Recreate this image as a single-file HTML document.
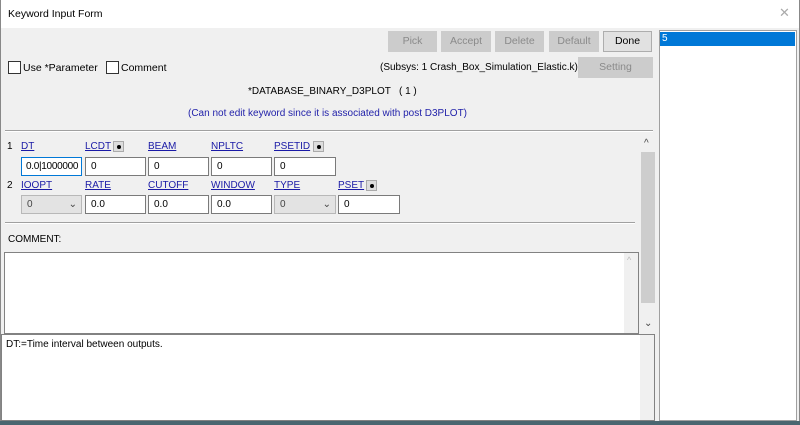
<!DOCTYPE html>
<html><head><style>
*{box-sizing:border-box;margin:0;padding:0}
body{width:800px;height:425px;background:#f0f0f0;font-family:"Liberation Sans",sans-serif;font-size:10px;color:#000;position:relative;overflow:hidden}
.a{position:absolute}
.btn{position:absolute;height:21px;background:#cccccc;border:1px solid #cccccc;color:#8a8a8a;text-align:center;line-height:19px;font-size:10.5px}
.in{position:absolute;height:19px;background:#fff;border:1px solid #7a7a7a;padding-left:5px;line-height:17px;font-size:10px;overflow:hidden;white-space:nowrap}
.sel{position:absolute;height:19px;background:#e3e3e3;border:1px solid #b8b8b8;padding-left:5px;line-height:17px;font-size:10px;color:#444}
.lb{position:absolute;color:#1a1aa6;text-decoration:underline;font-size:10px}
.dot{position:absolute;width:11px;height:11px;background:#ddd;border:1px solid #aaa}
.dot:after{content:"";position:absolute;left:3px;top:3px;width:4px;height:4px;border-radius:50%;background:#000}
.cb{position:absolute;width:13px;height:13px;border:1px solid #333;background:#fff}
</style></head><body>
<div class="a" style="left:0;top:0;width:800px;height:28px;background:#fff"></div>
<div class="a" style="left:8px;top:8px;font-size:10.5px">Keyword Input Form</div>
<div class="a" style="left:779px;top:5px;font-size:13px;color:#aaa">✕</div>
<div class="a" style="left:0;top:0;width:1px;height:425px;background:#888"></div>
<div class="a" style="left:799px;top:0;width:1px;height:425px;background:#888"></div>

<div class="btn" style="left:388px;top:31px;width:49px">Pick</div>
<div class="btn" style="left:441px;top:31px;width:50px">Accept</div>
<div class="btn" style="left:495px;top:31px;width:49px">Delete</div>
<div class="btn" style="left:549px;top:31px;width:50px">Default</div>
<div class="btn" style="left:603px;top:31px;width:49px;background:#e1e1e1;border-color:#adadad;color:#000">Done</div>
<div class="btn" style="left:578px;top:57px;width:75px">Setting</div>

<div class="cb" style="left:8px;top:61px"></div><div class="a" style="left:23px;top:62px;font-size:10.5px">Use *Parameter</div>
<div class="cb" style="left:106px;top:61px"></div><div class="a" style="left:121px;top:62px;font-size:10.5px">Comment</div>
<div class="a" style="left:380px;top:62px">(Subsys: 1 Crash_Box_Simulation_Elastic.k)</div>
<div class="a" style="left:248px;top:86px">*DATABASE_BINARY_D3PLOT &nbsp;&nbsp;( 1 )</div>
<div class="a" style="left:188px;top:108px;color:#2222aa">(Can not edit keyword since it is associated with post D3PLOT)</div>
<div class="a" style="left:5px;top:130px;width:648px;height:2px;border-top:1px solid #a0a0a0;border-bottom:1px solid #fff"></div>

<div class="a" style="left:7px;top:141px">1</div>
<div class="lb" style="left:21px;top:141px">DT</div>
<div class="lb" style="left:85px;top:141px">LCDT</div><div class="dot" style="left:113px;top:141px"></div>
<div class="lb" style="left:148px;top:141px">BEAM</div>
<div class="lb" style="left:211px;top:141px">NPLTC</div>
<div class="lb" style="left:274px;top:141px">PSETID</div><div class="dot" style="left:313px;top:141px"></div>
<div class="in" style="left:21px;top:157px;width:61px;border-color:#0078d7;padding-left:4px;letter-spacing:-0.3px">0.0|1000000</div>
<div class="in" style="left:85px;top:157px;width:61px">0</div>
<div class="in" style="left:148px;top:157px;width:61px">0</div>
<div class="in" style="left:211px;top:157px;width:61px">0</div>
<div class="in" style="left:274px;top:157px;width:62px">0</div>

<div class="a" style="left:7px;top:180px">2</div>
<div class="lb" style="left:21px;top:180px">IOOPT</div>
<div class="lb" style="left:85px;top:180px">RATE</div>
<div class="lb" style="left:148px;top:180px">CUTOFF</div>
<div class="lb" style="left:211px;top:180px">WINDOW</div>
<div class="lb" style="left:274px;top:180px">TYPE</div>
<div class="lb" style="left:338px;top:180px">PSET</div><div class="dot" style="left:366px;top:180px"></div>
<div class="sel" style="left:21px;top:195px;width:61px">0<span style="position:absolute;right:4px;top:0">⌄</span></div>
<div class="in" style="left:85px;top:195px;width:61px">0.0</div>
<div class="in" style="left:148px;top:195px;width:61px">0.0</div>
<div class="in" style="left:211px;top:195px;width:61px">0.0</div>
<div class="sel" style="left:274px;top:195px;width:62px">0<span style="position:absolute;right:4px;top:0">⌄</span></div>
<div class="in" style="left:338px;top:195px;width:62px">0</div>
<div class="a" style="left:5px;top:222px;width:630px;height:2px;border-top:1px solid #a0a0a0;border-bottom:1px solid #fff"></div>
<div class="a" style="left:8px;top:234px;font-size:10px">COMMENT:</div>

<div class="a" style="left:4px;top:252px;width:635px;height:82px;background:#fff;border:1px solid #828282"></div>
<div class="a" style="left:624px;top:253px;width:14px;height:80px;background:#f0f0f0"></div>
<div class="a" style="left:627px;top:255px;color:#bbb;font-size:9px">^</div>
<div class="a" style="left:641px;top:137px;width:14px;height:196px;background:#f0f0f0"></div>
<div class="a" style="left:641px;top:152px;width:14px;height:151px;background:#cdcdcd"></div>
<div class="a" style="left:644px;top:138px;font-size:10px;color:#444">^</div>
<div class="a" style="left:644px;top:318px;font-size:10px;color:#444">⌄</div>

<div class="a" style="left:1px;top:334px;width:654px;height:87px;background:#fff;border:1px solid #828282"></div>
<div class="a" style="left:640px;top:335px;width:14px;height:85px;background:#f0f0f0"></div>
<div class="a" style="left:6px;top:339px;font-size:10px">DT:=Time interval between outputs.</div>

<div class="a" style="left:659px;top:30px;width:138px;height:391px;background:#fff;border:1px solid #a0a0a0"></div>
<div class="a" style="left:660px;top:32px;width:135px;height:14px;background:#0078d7;color:#fff;font-size:10px;padding-left:2px;line-height:13px">5</div>
<div class="a" style="left:0;top:421px;width:800px;height:4px;background:#4a6670"></div>
</body></html>
